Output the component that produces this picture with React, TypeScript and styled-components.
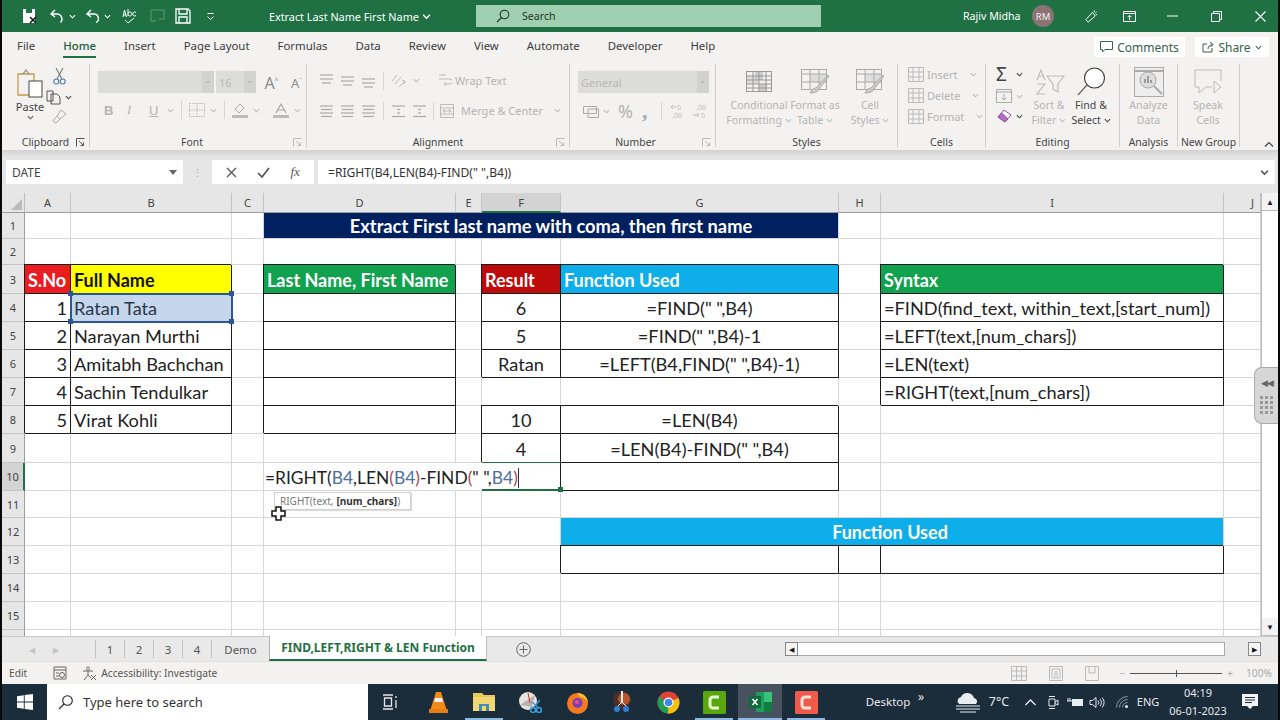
import React from "react";
import styled, { createGlobalStyle } from "styled-components";

const UI = `"Noto Sans", "Open Sans", sans-serif`;
const SHEET = `"Lato", "Liberation Sans", sans-serif`;
const MUTED = "#b4b4b4";
const INK = "#444";

const GlobalStyle = createGlobalStyle`
  html, body { margin: 0; padding: 0; width: 1280px; height: 720px; overflow: hidden; background: #000; }
  #root { width: 1280px; height: 720px; }
  * { box-sizing: border-box; }
`;

const Shell = styled.div`
  width: 1280px;
  height: 720px;
  display: flex;
  flex-direction: column;
  border-left: 2px solid #0a0a0a;
  border-right: 2px solid #0a0a0a;
  font-family: ${UI};
  background: #f3f2f1;
  position: relative;
  overflow: hidden;
`;
const Gap = styled.span<{ $w: number }>`
  width: ${(p) => p.$w}px;
  flex: none;
`;

/* ---------- title bar ---------- */
const TitleBar = styled.div`
  height: 32px;
  flex: none;
  display: flex;
  align-items: center;
  background: #1f7144;
  color: #fff;
  font-size: 11.5px;
`;
const Qat = styled.div`
  display: flex;
  align-items: center;
  width: 267px;
  padding-left: 19px;
`;
const Slot = styled.span<{ $w: number }>`
  width: ${(p) => p.$w}px;
  flex: none;
  display: flex;
  justify-content: center;
  align-items: center;
`;
const DocTitle = styled.div`
  width: 207px;
  flex: none;
  white-space: nowrap;
  font-size: 10.8px;
  display: flex;
  align-items: center;
  gap: 3px;
`;
const SearchBox = styled.div`
  width: 345px;
  height: 22px;
  flex: none;
  background: #9fcfb0;
  color: #22382b;
  display: flex;
  align-items: center;
  padding-left: 20px;
  gap: 12px;
  font-size: 10.6px;
`;
const UserName = styled.div`
  margin-left: 142px;
  width: 69px;
  flex: none;
  font-size: 10.6px;
  white-space: nowrap;
`;
const Avatar = styled.div`
  width: 22px;
  height: 22px;
  border-radius: 50%;
  flex: none;
  background: #8b7374;
  font-size: 9.5px;
  display: flex;
  align-items: center;
  justify-content: center;
  margin-right: 30px;
  color: #eee;
`;

/* ---------- ribbon tabs ---------- */
const MenuRow = styled.div`
  height: 26px;
  flex: none;
  display: flex;
  align-items: stretch;
  padding-left: 15px;
  gap: 28px;
  font-size: 11.4px;
  color: #3c3c3c;
`;
const MenuTab = styled.div<{ $active?: boolean }>`
  display: flex;
  align-items: center;
  white-space: nowrap;
  padding-top: 3px;
  color: ${(p) => (p.$active ? "#1c5c38" : "#3c3c3c")};
  border-bottom: 2px solid ${(p) => (p.$active ? "#1f7144" : "transparent")};
  font-weight: ${(p) => (p.$active ? 500 : 400)};
`;
const MenuEnd = styled.div`
  margin-left: auto;
  display: flex;
  align-items: center;
  gap: 10px;
  padding: 4px 9px 0 0;
`;
const PillButton = styled.div<{ $w: number }>`
  width: ${(p) => p.$w}px;
  height: 20px;
  background: #fff;
  display: flex;
  align-items: center;
  justify-content: center;
  gap: 4px;
  font-size: 12px;
  color: #38604a;
`;

/* ---------- ribbon ---------- */
const Ribbon = styled.div`
  height: 92px;
  flex: none;
  display: flex;
  padding-top: 6px;
  background: #f3f2f1;
  position: relative;
`;
const Group = styled.div<{ $w: number }>`
  width: ${(p) => p.$w}px;
  flex: none;
  height: 83px;
  border-right: 1px solid #cfcfcf;
  display: flex;
  flex-direction: column;
`;
const GroupBody = styled.div<{ $pad?: number }>`
  flex: 1;
  display: flex;
  padding-left: ${(p) => p.$pad ?? 0}px;
  padding-top: 4px;
  min-height: 0;
`;
const GroupFoot = styled.div<{ $nudge?: number }>`
  height: 12px;
  flex: none;
  display: grid;
  grid-template-columns: 1fr auto 1fr;
  align-items: center;
  padding-right: ${(p) => p.$nudge ?? 0}px;
  font-size: 10.4px;
  color: #444;
  white-space: nowrap;
`;
const Launcher = styled.span<{ $back?: number }>`
  justify-self: end;
  margin-right: ${(p) => 4 - (p.$back ?? 0)}px;
  display: flex;
`;
const Col = styled.div<{ $gap?: number; $w?: number; $top?: number; $center?: boolean }>`
  display: flex;
  flex-direction: column;
  gap: ${(p) => p.$gap ?? 0}px;
  width: ${(p) => (p.$w ? `${p.$w}px` : "auto")};
  margin-top: ${(p) => p.$top ?? 0}px;
  align-items: ${(p) => (p.$center ? "center" : "flex-start")};
  flex: none;
`;
const Row = styled.div<{ $gap?: number }>`
  display: flex;
  align-items: center;
  gap: ${(p) => p.$gap ?? 0}px;
`;
const FormatRow = styled(Row)`
  padding-left: 6px;
  color: ${MUTED};
  font-size: 13px;
`;
const FmtLetter = styled.span<{ $w: number; $kind: "b" | "i" | "u" }>`
  width: ${(p) => p.$w}px;
  flex: none;
  font-family: ${(p) => (p.$kind === "i" ? `"Liberation Serif", serif` : `"Liberation Sans", sans-serif`)};
  font-weight: ${(p) => (p.$kind === "b" ? 700 : 400)};
  font-style: ${(p) => (p.$kind === "i" ? "italic" : "normal")};
  text-decoration: ${(p) => (p.$kind === "u" ? "underline" : "none")};
`;
const GrowLetter = styled.span<{ $size: number }>`
  width: 23px;
  flex: none;
  text-align: center;
  color: #8c8c8c;
  font-size: ${(p) => p.$size}px;
  line-height: 20px;
  sup {
    font-size: 7px;
  }
`;
const ComboBox = styled.div<{ $w: number }>`
  width: ${(p) => p.$w}px;
  height: 22px;
  flex: none;
  background: #dcdcda;
  color: #b8b8b8;
  font-size: 11px;
  display: flex;
  align-items: center;
  padding-left: 3px;
  position: relative;
  &::after {
    content: "⌄";
    position: absolute;
    right: 0;
    top: 0;
    width: 12px;
    height: 22px;
    background: #d2d2d0;
    color: #aaa;
    font-size: 9px;
    line-height: 17px;
    text-align: center;
  }
`;
const VDivider = styled.span<{ $mx?: number }>`
  width: 1px;
  height: 18px;
  background: #d5d5d5;
  flex: none;
  margin: 0 ${(p) => p.$mx ?? 0}px;
`;
const BtnLabel = styled.div<{ $muted?: boolean; $size?: number; $mt?: number }>`
  font-size: ${(p) => p.$size ?? 10.6}px;
  line-height: 15px;
  margin-top: ${(p) => p.$mt ?? 0}px;
  text-align: center;
  color: ${(p) => (p.$muted ? MUTED : INK)};
  white-space: nowrap;
`;
const BigBtn = styled.div<{ $w: number; $muted?: boolean }>`
  width: ${(p) => p.$w}px;
  flex: none;
  display: flex;
  flex-direction: column;
  align-items: center;
  color: ${(p) => (p.$muted ? MUTED : INK)};
`;
const IconBox = styled.div<{ $h: number; $lift?: number }>`
  height: ${(p) => p.$h}px;
  padding-bottom: ${(p) => p.$lift ?? 0}px;
  display: flex;
  align-items: center;
  justify-content: center;
  flex: none;
`;
const SmallBtn = styled.div`
  display: flex;
  align-items: center;
  gap: 3px;
  height: 21px;
  font-size: 11px;
  color: ${MUTED};
  white-space: nowrap;
`;
const NumRow = styled(Row)`
  color: ${MUTED};
  padding-left: 5px;
`;
const Percent = styled.span`
  font-size: 18px;
  width: 24px;
  line-height: 20px;
  flex: none;
`;
const CommaMark = styled.b`
  font-size: 22px;
  width: 19px;
  line-height: 14px;
  flex: none;
  font-family: "Liberation Serif", serif;
  color: #aaa;
`;
const Sigma = styled.span`
  font-size: 19px;
  line-height: 18px;
  color: #444;
  width: 17px;
  flex: none;
`;
const Collapse = styled.span`
  margin-left: auto;
  align-self: flex-end;
  margin-right: 4px;
  margin-bottom: 2px;
  display: flex;
`;

/* ---------- formula bar ---------- */
const FormulaBar = styled.div`
  height: 43px;
  flex: none;
  display: flex;
  padding: 10px 3px 9px 4px;
  background: linear-gradient(#d2d2d2 0, #e6e6e6 8px, #e6e6e6 100%);
  font-size: 12px;
  color: #444;
`;
const NameBox = styled.div`
  width: 177px;
  background: #fff;
  display: flex;
  align-items: center;
  justify-content: space-between;
  padding: 0 6px;
  flex: none;
`;
const Grip = styled.div`
  width: 29px;
  flex: none;
  display: flex;
  align-items: center;
  justify-content: center;
  color: #aaa;
  font-size: 11px;
`;
const FxBox = styled.div`
  width: 102px;
  flex: none;
  background: #fff;
  display: flex;
  align-items: center;
  justify-content: space-around;
  padding: 0 4px;
`;
const FxGlyph = styled.span`
  font-family: "Liberation Serif", serif;
  font-style: italic;
  font-size: 13px;
  color: #555;
`;
const FormulaInput = styled.div`
  flex: 1;
  margin-left: 4px;
  background: #fff;
  display: flex;
  align-items: center;
  justify-content: space-between;
  padding: 0 6px 0 10px;
  font-size: 12.1px;
  color: #333;
`;

/* ---------- sheet ---------- */
const Sheet = styled.div`
  height: 443px;
  flex: none;
  display: flex;
  position: relative;
  overflow: hidden;
  background: #fff;
`;
const Grid = styled.div<{ $cols: string; $rows: string }>`
  display: grid;
  grid-template-columns: ${(p) => p.$cols};
  grid-template-rows: ${(p) => p.$rows};
  font-family: ${SHEET};
  font-size: 18.2px;
  color: #222;
`;
const Corner = styled.div`
  background: #e6e6e6;
  border-right: 1px solid #bdbdbd;
  border-bottom: 1px solid #9c9c9c;
  position: relative;
  &::after {
    content: "";
    position: absolute;
    right: 2px;
    bottom: 2px;
    border-left: 11px solid transparent;
    border-bottom: 11px solid #bcbcbc;
  }
`;
const ColHead = styled.div<{ $on?: boolean; $end?: boolean }>`
  background: ${(p) => (p.$on ? "#d3d3d3" : "#e6e6e6")};
  border-right: 1px solid #c4c4c4;
  border-bottom: ${(p) => (p.$on ? "2px solid #1f7144" : "1px solid #9c9c9c")};
  display: flex;
  align-items: center;
  justify-content: ${(p) => (p.$end ? "flex-end" : "center")};
  padding-right: ${(p) => (p.$end ? 6 : 0)}px;
  font: 11px ${UI};
  color: #444;
`;
const RowHead = styled.div<{ $on?: boolean }>`
  background: ${(p) => (p.$on ? "#d3d3d3" : "#e6e6e6")};
  border-right: ${(p) => (p.$on ? "2px solid #1f7144" : "1px solid #9c9c9c")};
  border-bottom: 1px solid #c4c4c4;
  display: flex;
  align-items: center;
  justify-content: center;
  font: 11px ${UI};
  color: #444;
`;
type CellStyle = {
  $span?: number;
  $bg?: string;
  $color?: string;
  $bold?: boolean;
  $align?: "left" | "right" | "center";
  $box?: boolean;
  $size?: number;
  $sel?: boolean;
  $noRight?: boolean;
  $active?: boolean;
  $shift?: number;
};
const CellBox = styled.div<CellStyle>`
  grid-column: span ${(p) => p.$span ?? 1};
  min-width: 0;
  display: flex;
  align-items: center;
  padding: 1px ${(p) => 3 + (p.$shift ?? 0)}px 0 3px;
  white-space: nowrap;
  position: relative;
  background: ${(p) => (p.$sel ? "#c6d6ea" : p.$bg ?? "transparent")};
  color: ${(p) => p.$color ?? "#222"};
  font-weight: ${(p) => (p.$bold ? 700 : 400)};
  font-size: ${(p) => (p.$size ? `${p.$size}px` : "inherit")};
  justify-content: ${(p) =>
    p.$align === "right" ? "flex-end" : p.$align === "center" ? "center" : "flex-start"};
  border-right: 1px solid ${(p) => (p.$box ? "#1c1c1c" : p.$noRight ? "transparent" : "#d6d6d6")};
  border-bottom: 1px solid ${(p) => (p.$box ? "#1c1c1c" : "#d6d6d6")};
  box-shadow: ${(p) => (p.$box ? "-1px -1px 0 #1c1c1c" : "none")};
  ${(p) => (p.$sel ? "outline: 2px solid #2b5797; outline-offset: -1px; z-index: 2;" : "")}
  ${(p) =>
    p.$active
      ? "border-bottom: 2px solid #1f7144; border-right-color: transparent; box-shadow: 0 -1px 0 #1f7144; z-index: 2;"
      : ""}
`;
const Handle = styled.span<{ $x: "left" | "right"; $y: "top" | "bottom"; $c?: string }>`
  position: absolute;
  ${(p) => p.$x}: -3px;
  ${(p) => p.$y}: -3px;
  width: 5px;
  height: 5px;
  background: ${(p) => p.$c ?? "#2b5797"};
  z-index: 3;
`;
const Overflowing = styled.span`
  position: relative;
  z-index: 4;
  margin-left: -2px;
  font-size: 17.4px;
  color: #222;
`;
const Ref = styled.span`
  color: #4a6fa5;
`;
const Paren = styled.span`
  color: #a8464f;
`;
const Caret = styled.span`
  display: inline-block;
  width: 1px;
  height: 20px;
  background: #333;
  vertical-align: -4px;
`;
const FnTip = styled.div`
  position: absolute;
  left: 272px;
  top: 299px;
  height: 18px;
  width: 137px;
  background: #fff;
  border: 1px solid #cfcfcf;
  box-shadow: 1px 1px 1px #ddd;
  font: 10px ${UI};
  color: #777;
  display: flex;
  align-items: center;
  padding-left: 5px;
  white-space: nowrap;
  z-index: 6;
  b {
    color: #333;
    margin-left: 3px;
  }
`;
const Pointer = styled.span`
  position: absolute;
  left: 269px;
  top: 313px;
  z-index: 7;
  display: flex;
`;
const VScroll = styled.div`
  width: 17px;
  flex: none;
  background: #fff;
  border-left: 1px solid #bbb;
  display: flex;
  flex-direction: column;
  justify-content: space-between;
  align-items: stretch;
`;
const VBtn = styled.div`
  height: 18px;
  border-bottom: 1px solid #bbb;
  background: #f3f3f3;
  display: flex;
  align-items: center;
  justify-content: center;
  color: #222;
  font-size: 8px;
`;
const SplitTab = styled.div`
  position: absolute;
  right: 0;
  top: 174px;
  width: 24px;
  height: 57px;
  background: #d6d6d6;
  border: 1px solid #aaa;
  border-right: none;
  border-radius: 8px 0 0 8px;
  display: flex;
  flex-direction: column;
  align-items: center;
  padding-top: 8px;
  gap: 7px;
  z-index: 5;
`;
const SplitArrows = styled.span`
  font-size: 9px;
  color: #666;
  letter-spacing: -1px;
`;

/* ---------- sheet tabs ---------- */
const TabsBar = styled.div`
  height: 25px;
  flex: none;
  display: flex;
  align-items: stretch;
  background: #e9e9e9;
  border-top: 1px solid #c9c9c9;
  font-size: 11.4px;
  color: #555;
`;
const TabNav = styled.div`
  width: 93px;
  flex: none;
  display: flex;
  align-items: center;
  gap: 18px;
  padding-left: 27px;
  color: #c4c4c4;
  font-size: 8px;
`;
const SheetTab = styled.div<{ $w: number; $active?: boolean }>`
  width: ${(p) => p.$w}px;
  flex: none;
  display: flex;
  align-items: center;
  justify-content: center;
  white-space: nowrap;
  border-left: 1px solid ${(p) => (p.$active ? "#b5b5b5" : "#c0c0c0")};
  margin: ${(p) => (p.$active ? "-1px 0 0" : "3px 0")};
  background: ${(p) => (p.$active ? "#fff" : "transparent")};
  color: ${(p) => (p.$active ? "#1f7144" : "#555")};
  font-weight: ${(p) => (p.$active ? 700 : 400)};
  font-size: ${(p) => (p.$active ? 12 : 11.4)}px;
  border-bottom: ${(p) => (p.$active ? "2px solid #1f7144" : "none")};
  border-right: ${(p) => (p.$active ? "1px solid #c0c0c0" : "none")};
`;
const AddTab = styled.div`
  margin-left: 29px;
  width: 16px;
  display: flex;
  align-items: center;
`;
const HScroll = styled.div`
  margin-left: auto;
  margin-right: 20px;
  width: 473px;
  display: flex;
  align-items: center;
`;
const HBtn = styled.div`
  width: 13px;
  height: 14px;
  border: 1px solid #888;
  background: #f4f4f4;
  font-size: 7px;
  color: #111;
  display: flex;
  align-items: center;
  justify-content: center;
  flex: none;
`;
const HTrack = styled.div`
  width: 427px;
  height: 14px;
  border: 1px solid #aaa;
  border-left: none;
  background: #fff;
  margin-right: 23px;
  flex: none;
`;

/* ---------- status bar ---------- */
const StatusBar = styled.div`
  height: 23px;
  flex: none;
  display: flex;
  align-items: center;
  padding-left: 7px;
  background: #f3f2f1;
  border-top: 1px solid #e0e0e0;
  font-size: 10.2px;
  color: #555;
  white-space: nowrap;
`;
const StatusEnd = styled.div`
  margin-left: auto;
  display: flex;
  align-items: center;
  padding-right: 6px;
  color: #aaa;
`;
const ZoomSlider = styled.div`
  width: 92px;
  height: 1px;
  background: #555;
  margin: 0 5px;
  position: relative;
  &::after {
    content: "";
    position: absolute;
    left: 46px;
    top: -3px;
    width: 1px;
    height: 7px;
    background: #555;
  }
`;

/* ---------- taskbar ---------- */
const Taskbar = styled.div`
  height: 36px;
  flex: none;
  display: flex;
  align-items: stretch;
  background: #1b2c3b;
  color: #e4e8ec;
  font-size: 11.5px;
`;
const StartBtn = styled.div`
  width: 45px;
  flex: none;
  display: flex;
  align-items: center;
  justify-content: center;
`;
const TaskSearch = styled.div`
  width: 321px;
  flex: none;
  background: #fff;
  display: flex;
  align-items: center;
  gap: 10px;
  padding-left: 11px;
  color: #333;
  font-size: 13px;
`;
const TaskItem = styled.div<{ $w: number; $open?: boolean; $active?: boolean }>`
  width: ${(p) => p.$w}px;
  flex: none;
  display: flex;
  align-items: center;
  justify-content: center;
  position: relative;
  background: ${(p) => (p.$active ? "#46535f" : "transparent")};
  &::after {
    content: "";
    display: ${(p) => (p.$open ? "block" : "none")};
    position: absolute;
    bottom: 0;
    left: 50%;
    width: ${(p) => (p.$active ? "100%" : "38px")};
    height: 2px;
    transform: translateX(-50%);
    background: #8fb9de;
  }
`;
const TrayText = styled.div<{ $w: number; $size?: number }>`
  width: ${(p) => p.$w}px;
  flex: none;
  display: flex;
  flex-direction: column;
  align-items: center;
  justify-content: center;
  font-size: ${(p) => p.$size ?? 11.5}px;
  line-height: 18px;
  white-space: nowrap;
`;
const DoubleChevron = styled.span`
  font-size: 12px;
  margin-top: -12px;
`;

/* ---------- icons ---------- */
const Chevron = ({ c = "#888", s = 7 }: { c?: string; s?: number }) => (
  <svg width={s} height={s} viewBox="0 0 8 8" fill="none" stroke={c} strokeWidth="1.2">
    <path d="M1 2.5 4 5.5 7 2.5" />
  </svg>
);
const LinesIcon = ({ rows, c = "#aaa" }: { rows: [number, number][]; c?: string }) => (
  <svg width="15" height="14" viewBox="0 0 15 14" stroke={c} strokeWidth="1.2">
    {rows.map(([y, x], i) => (
      <path key={i} d={`M${x} ${y}H${15 - x}`} />
    ))}
  </svg>
);
const AlignLines = ({ y }: { y: number }) => (
  <LinesIcon rows={[[y, 1], [y + 4, 1], [y + 8, 3]]} />
);
const FullLines = () => <LinesIcon rows={[[2, 1], [5.5, 2], [9, 1], [12.5, 2]]} />;
const Launch = ({ c = "#999" }: { c?: string }) => (
  <svg width="9" height="9" viewBox="0 0 9 9" fill="none" stroke={c}>
    <path d="M.5 8.5V.5H8.5M3 3 7.5 7.5M7.5 4.5V7.5H4.5" />
  </svg>
);
const SaveIcon = ({ c = "#fff", w = 16 }: { c?: string; w?: number }) => (
  <svg width={w} height={w} viewBox="0 0 16 16" fill="none" stroke={c} strokeWidth="1.3">
    <path d="M1 1H13L15 3V15H1ZM4 1V6H12V1M4 15V9H12V15" />
  </svg>
);
const GridIcon = ({ fill = "#ddd", w = 26, h = 21 }: { fill?: string; w?: number; h?: number }) => (
  <svg width={w} height={h} viewBox="0 0 26 21" fill="none" stroke="#999">
    <rect x=".5" y=".5" width="25" height="20" />
    <rect x="1" y="5" width="12" height="8" fill={fill} stroke="none" />
    <rect x="9" y="1" width="8" height="8" fill="#ccc" stroke="none" />
    <rect x="13" y="13" width="8" height="7" fill="#ccc" stroke="none" />
    <path d="M0 5H26M0 9H26M0 13H26M0 17H26M7 0V21M13 0V21M20 0V21" />
  </svg>
);
const BrushTable = () => (
  <svg width="28" height="26" viewBox="0 0 28 26" fill="none" stroke="#aaa">
    <rect x=".5" y=".5" width="25" height="20" />
    <rect x="9" y="5" width="16" height="8" fill="#ddd" stroke="none" />
    <path d="M0 5H26M0 13H26M9 0V21M18 0V21" />
    <path d="M27 6 15 19c-3 0-4 2-6 5 4 0 8-1 9-4L27.5 8Z" fill="#ccc" />
  </svg>
);

export default function App() {
  const colNames = ["A", "B", "C", "D", "E", "F", "G", "H", "I", "J"];
  const colWidths = [46, 161, 32, 192, 26, 79, 278, 42, 343, 37];
  const rowHeights = [26, 26, 29, 28, 28, 28, 28, 28, 29, 28, 27, 28, 28, 28, 28, 28];

  const RED = "#e91c22";
  const GREEN = "#12a24f";
  const BLUE = "#0eaeea";
  const DARK = "#bd0a0a";
  const NAVY = "#002060";

  const head = (text: string, $bg: string, $color = "#fff") => ({ text, $bg, $color, $bold: true, $box: true, $size: 18 });
  const num = (text: string) => ({ text, $box: true, $align: "right" as const });
  const mid = (text: string) => ({ text, $box: true, $align: "center" as const });
  const left = (text: string) => ({ text, $box: true });

  const cells: Record<string, CellStyle & { text?: React.ReactNode }> = {
    D1: { text: "Extract First last name with coma, then first name", $span: 4, $bg: NAVY, $color: "#fff", $bold: true, $align: "center", $size: 18.3 },
    A3: head("S.No", RED),
    B3: head("Full Name", "#ffff00", "#111"),
    D3: head("Last Name, First Name", GREEN),
    F3: head("Result", DARK),
    G3: head("Function Used", BLUE),
    I3: head("Syntax", GREEN),
    A4: num("1"),
    B4: { text: "Ratan Tata", $sel: true, $color: "#29364a" },
    D4: left(""),
    F4: mid("6"),
    G4: mid('=FIND(" ",B4)'),
    I4: left("=FIND(find_text, within_text,[start_num])"),
    A5: num("2"),
    B5: left("Narayan Murthi"),
    D5: left(""),
    F5: mid("5"),
    G5: mid('=FIND(" ",B4)-1'),
    I5: left("=LEFT(text,[num_chars])"),
    A6: num("3"),
    B6: left("Amitabh Bachchan"),
    D6: left(""),
    F6: mid("Ratan"),
    G6: mid('=LEFT(B4,FIND(" ",B4)-1)'),
    I6: left("=LEN(text)"),
    A7: num("4"),
    B7: left("Sachin Tendulkar"),
    D7: left(""),
    I7: left("=RIGHT(text,[num_chars])"),
    A8: num("5"),
    B8: left("Virat Kohli"),
    D8: left(""),
    F8: mid("10"),
    G8: mid("=LEN(B4)"),
    F9: mid("4"),
    G9: mid('=LEN(B4)-FIND(" ",B4)'),
    D10: {
      $noRight: true,
      text: (
        <Overflowing>
          =RIGHT(<Ref>B4</Ref>,LEN<Paren>(</Paren>
          <Ref>B4</Ref>
          <Paren>)</Paren>-FIND<Paren>(</Paren>" ",<Ref>B4</Ref>
          <Paren>)</Paren>
          <Caret />
        </Overflowing>
      ),
    },
    E10: { $noRight: true },
    F10: { $active: true },
    G10: { $box: true },
    G12: { text: "Function Used", $span: 3, $bg: BLUE, $color: "#fff", $bold: true, $align: "center", $size: 18, $shift: 4 },
    G13: { $box: true },
    H13: { $box: true },
    I13: { $box: true },
  };

  const gridCells: React.ReactNode[] = [
    <Corner key="corner" />,
    ...colNames.map((n) => (
      <ColHead key={n} $on={n === "F"} $end={n === "J"}>
        {n}
      </ColHead>
    )),
  ];
  rowHeights.forEach((_, r) => {
    const rowNo = r + 1;
    gridCells.push(
      <RowHead key={`r${rowNo}`} $on={rowNo === 10}>
        {rowNo < 16 ? rowNo : ""}
      </RowHead>
    );
    let skip = 0;
    colNames.forEach((n) => {
      if (skip > 0) {
        skip -= 1;
        return;
      }
      const id = `${n}${rowNo}`;
      const { text, ...style } = cells[id] ?? {};
      if (style.$span) skip = style.$span - 1;
      gridCells.push(
        <CellBox key={id} {...style}>
          {text}
          {id === "B4" && (
            <>
              <Handle $x="left" $y="top" />
              <Handle $x="right" $y="top" />
              <Handle $x="left" $y="bottom" />
              <Handle $x="right" $y="bottom" />
            </>
          )}
          {id === "F10" && <Handle $x="right" $y="bottom" $c="#1f7144" />}
        </CellBox>
      );
    });
  });

  return (
    <>
      <GlobalStyle />
      <Shell>
        <TitleBar>
          <Qat>
            <Slot $w={18}>
              <svg width="16" height="16" viewBox="0 0 16 16">
                <rect x="1" y="1" width="12" height="14" fill="#fff" />
                <rect x="4" y="1" width="6" height="4" fill="#1f7144" />
                <path d="M8 9 14 15M14 9 8 15" stroke="#111" strokeWidth="1.5" />
              </svg>
            </Slot>
            <Gap $w={7} />
            <Slot $w={20}>
              <svg width="17" height="15" viewBox="0 0 17 15" fill="none" stroke="#fff" strokeWidth="1.4">
                <path d="M10 1 14 5 10 8M14 5H7.5a5 5 0 0 0-3 8.5" transform="matrix(-1 0 0 1 17 0)" />
              </svg>
            </Slot>
            <Slot $w={12}>
              <Chevron c="#fff" />
            </Slot>
            <Gap $w={4} />
            <Slot $w={20}>
              <svg width="17" height="15" viewBox="0 0 17 15" fill="none" stroke="#fff" strokeWidth="1.4">
                <path d="M7 1 3 5 7 8M3 5H10a4.500 4.500 0 0 1 2 8.500" />
              </svg>
            </Slot>
            <Slot $w={10}>
              <Chevron c="#fff" />
            </Slot>
            <Gap $w={5} />
            <Slot $w={24}>
              <svg width="15" height="16" viewBox="0 0 15 16" fill="none" stroke="#fff">
                <path d="M1 9 2.500 2 4.500 9M1.500 7H3.800M6 1V8M6 5.500a2 2 0 1 1 0 1M14 4.500a2 2 0 1 0 0 3M3 12 6 15 12 10" />
              </svg>
            </Slot>
            <Gap $w={4} />
            <Slot $w={24}>
              <svg width="15" height="14" viewBox="0 0 15 14" fill="none" stroke="#5f9a7a">
                <path d="M1 1H14V10H9M1 1V12H6" />
              </svg>
            </Slot>
            <Gap $w={2} />
            <Slot $w={24}>
              <SaveIcon />
            </Slot>
            <Gap $w={3} />
            <Slot $w={24}>
              <svg width="9" height="9" viewBox="0 0 9 9" fill="none" stroke="#fff">
                <path d="M1.500 1.500H7.500M1.500 4.500 4.500 7.500 7.500 4.500" />
              </svg>
            </Slot>
          </Qat>
          <DocTitle>
            Extract Last Name First Name <Chevron c="#fff" s={9} />
          </DocTitle>
          <SearchBox>
            <svg width="14" height="14" viewBox="0 0 14 14" fill="none" stroke="#22382b" strokeWidth="1.1">
              <circle cx="8.500" cy="5.500" r="4.300" />
              <path d="M5.500 8.500 1 13" />
            </svg>
            Search
          </SearchBox>
          <UserName>Rajiv Midha</UserName>
          <Avatar>RM</Avatar>
          <Slot $w={14}>
            <svg width="15" height="15" viewBox="0 0 15 15" fill="none" stroke="#fff">
              <path d="M9 3 2 11 4.500 13.500 12 7ZM11 1V3M13.500 2.500 12 4M14 5.500H12.500" />
            </svg>
          </Slot>
          <Slot $w={62}>
            <svg width="13" height="11" viewBox="0 0 13 11" fill="none" stroke="#fff">
              <path d="M.5.5H12.500V10.500H.5ZM.5 2.500H12.500M6.500 9V4.500M4.500 6 6.500 4.500 8.500 6" />
            </svg>
          </Slot>
          <Slot $w={24}>
            <svg width="11" height="2" viewBox="0 0 11 2" stroke="#fff">
              <path d="M0 1H11" />
            </svg>
          </Slot>
          <Slot $w={64}>
            <svg width="11" height="11" viewBox="0 0 11 11" fill="none" stroke="#fff">
              <path d="M.5 2.500H8.500V10.500H.5ZM2.500 2.500V.5H10.500V8.500H8.500" />
            </svg>
          </Slot>
          <Slot $w={24}>
            <svg width="11" height="11" viewBox="0 0 11 11" stroke="#fff" strokeWidth="1.1">
              <path d="M.5.5 10.500 10.500M10.500.5.5 10.500" />
            </svg>
          </Slot>
        </TitleBar>

        <MenuRow>
          <MenuTab>File</MenuTab>
          <MenuTab $active>Home</MenuTab>
          <MenuTab>Insert</MenuTab>
          <MenuTab>Page Layout</MenuTab>
          <MenuTab>Formulas</MenuTab>
          <MenuTab>Data</MenuTab>
          <MenuTab>Review</MenuTab>
          <MenuTab>View</MenuTab>
          <MenuTab>Automate</MenuTab>
          <MenuTab>Developer</MenuTab>
          <MenuTab>Help</MenuTab>
          <MenuEnd>
            <PillButton $w={91}>
              <svg width="13" height="12" viewBox="0 0 13 12" fill="none" stroke="#38604a">
                <path d="M.5.5H12.500V8.500H5L2.500 11V8.500H.5Z" />
              </svg>
              Comments
            </PillButton>
            <PillButton $w={74}>
              <svg width="12" height="12" viewBox="0 0 12 12" fill="none" stroke="#38604a">
                <path d="M5 3H1V11H10V7M6 8C6 5 8 4 11 3.500M8 1 11 3.500 8.500 6" />
              </svg>
              Share
              <Chevron c="#38604a" />
            </PillButton>
          </MenuEnd>
        </MenuRow>

        <Ribbon>
          <Group $w={88}>
            <GroupBody $pad={13}>
              <Col $w={30} $center>
                <IconBox $h={30}>
                  <svg width="28" height="29" viewBox="0 0 28 29" fill="none">
                    <path d="M2 5H18V26H2Z" stroke="#c8994f" strokeWidth="1.3" />
                    <path d="M7 5 10 1 13 5" stroke="#888" strokeWidth="1.2" />
                    <rect x="13" y="12" width="13" height="16" fill="#fff" stroke="#444" />
                  </svg>
                </IconBox>
                <BtnLabel $size={11} $mt={1}>
                  Paste
                </BtnLabel>
                <Chevron c="#555" />
              </Col>
              <Col $w={28} $center $gap={4}>
                <svg width="13" height="17" viewBox="0 0 13 17" fill="none" stroke="#4a7aa8" strokeWidth="1.1">
                  <path d="M3 0 9 11M10 0 4 11" stroke="#777" />
                  <circle cx="3.300" cy="13.500" r="2.500" />
                  <circle cx="9.700" cy="13.500" r="2.500" />
                </svg>
                <Row $gap={3}>
                  <svg width="16" height="16" viewBox="0 0 16 16" fill="none" stroke="#555">
                    <path d="M1 2H7V12H1ZM5 5H11L14 8V15H5Z" fill="#f3f2f1" />
                  </svg>
                  <Chevron c="#444" />
                </Row>
                <svg width="15" height="15" viewBox="0 0 15 15" fill="none" stroke="#aaa">
                  <path d="M9 1 14 5 8 10 5 7ZM5 7 1 12 4 14 8 10" />
                </svg>
              </Col>
            </GroupBody>
            <GroupFoot>
              <span />
              <span>Clipboard</span>
              <Launcher>
                <Launch c="#555" />
              </Launcher>
            </GroupFoot>
          </Group>

          <Group $w={217}>
            <GroupBody $pad={8}>
              <Col $top={3} $gap={8}>
                <Row $gap={2}>
                  <ComboBox $w={116} />
                  <ComboBox $w={40}>16</ComboBox>
                  <Gap $w={0} />
                  <GrowLetter $size={16}>
                    A<sup>^</sup>
                  </GrowLetter>
                  <GrowLetter $size={13}>
                    A<sup>ˇ</sup>
                  </GrowLetter>
                </Row>
                <FormatRow>
                  <FmtLetter $w={23} $kind="b">B</FmtLetter>
                  <FmtLetter $w={22} $kind="i">I</FmtLetter>
                  <FmtLetter $w={18} $kind="u">U</FmtLetter>
                  <Chevron c="#bbb" />
                  <VDivider $mx={7} />
                  <svg width="16" height="14" viewBox="0 0 16 14" fill="none" stroke="#bbb" strokeDasharray="1.500 1">
                    <path d="M.5.5H15.500V13.500H.5ZM8 0V14M0 7H16" />
                  </svg>
                  <Gap $w={5} />
                  <Chevron c="#bbb" />
                  <VDivider $mx={7} />
                  <svg width="16" height="15" viewBox="0 0 16 15" fill="none" stroke="#aaa">
                    <path d="M3 6 8 1 12 5 7 10Z" />
                    <path d="M0 12H16V15H0Z" fill="#bbb" stroke="none" />
                  </svg>
                  <Gap $w={5} />
                  <Chevron c="#bbb" />
                  <Gap $w={13} />
                  <svg width="16" height="15" viewBox="0 0 16 15" fill="none" stroke="#aaa" strokeWidth="1.200">
                    <path d="M3 10 8 1 13 10M5 7H11" />
                    <path d="M0 12H16V15H0Z" fill="#bbb" stroke="none" />
                  </svg>
                  <Gap $w={5} />
                  <Chevron c="#bbb" />
                </FormatRow>
              </Col>
            </GroupBody>
            <GroupFoot $nudge={12}>
              <span />
              <span>Font</span>
              <Launcher $back={12}>
                <Launch c="#bbb" />
              </Launcher>
            </GroupFoot>
          </Group>

          <Group $w={263}>
            <GroupBody $pad={12}>
              <Col $top={2} $gap={9}>
                <Row $gap={6}>
                  <AlignLines y={1} />
                  <AlignLines y={3} />
                  <AlignLines y={5} />
                  <VDivider $mx={1} />
                  <svg width="16" height="16" viewBox="0 0 16 16" fill="none" stroke="#bbb">
                    <path d="M1 8 6 2M4 11 10 4M8 14 14 8M11 7 14 8 13 11" />
                  </svg>
                  <Chevron c="#bbb" />
                  <Gap $w={6} />
                  <SmallBtn>
                    <svg width="14" height="14" viewBox="0 0 14 14" fill="none" stroke="#bbb">
                      <path d="M1 1H8M1 5H12a2 2 0 0 1 0 5H6M8 8 6 10 8 12" />
                    </svg>
                    Wrap Text
                  </SmallBtn>
                </Row>
                <Row $gap={6}>
                  <FullLines />
                  <FullLines />
                  <FullLines />
                  <VDivider $mx={1} />
                  <LinesIcon rows={[[2, 1], [5.5, 6], [9, 6], [12.5, 1]]} />
                  <LinesIcon rows={[[2, 1], [5.5, 6], [9, 6], [12.5, 1]]} />
                  <VDivider />
                  <SmallBtn>
                    <svg width="14" height="14" viewBox="0 0 14 14" fill="none" stroke="#bbb">
                      <path d="M.5.5H13.500V13.500H.5ZM0 4H14M0 10H14M3 7H11M3 7 5 5.500M3 7 5 8.500M11 7 9 5.500M11 7 9 8.500" />
                    </svg>
                    <Gap $w={1} />
                    Merge &amp; Center
                    <Gap $w={5} />
                    <Chevron c="#bbb" />
                  </SmallBtn>
                </Row>
              </Col>
            </GroupBody>
            <GroupFoot>
              <span />
              <span>Alignment</span>
              <Launcher>
                <Launch c="#bbb" />
              </Launcher>
            </GroupFoot>
          </Group>

          <Group $w={146}>
            <GroupBody $pad={8}>
              <Col $top={3} $gap={8}>
                <ComboBox $w={131}>General</ComboBox>
                <NumRow>
                  <svg width="16" height="14" viewBox="0 0 16 14" fill="none" stroke="#aaa">
                    <path d="M.5 2.500H13.500V9.500H.5ZM5 5H15.500V13.500H5Z" fill="#f3f2f1" />
                  </svg>
                  <Gap $w={4} />
                  <Chevron c="#bbb" />
                  <Gap $w={8} />
                  <Percent>%</Percent>
                  <CommaMark>,</CommaMark>
                  <VDivider />
                  <Gap $w={8} />
                  <svg width="38" height="16" viewBox="0 0 38 16" fill="none" stroke="#bbb">
                    <path d="M1 4H6M1 4 3 2M1 4 3 6" />
                    <text x="7" y="7" fontSize="7" fill="#bbb" stroke="none" fontFamily="Noto Sans">
                      0
                    </text>
                    <text x="2" y="15" fontSize="7" fill="#bbb" stroke="none" fontFamily="Noto Sans">
                      .00
                    </text>
                    <text x="26" y="7" fontSize="7" fill="#bbb" stroke="none" fontFamily="Noto Sans">
                      .00
                    </text>
                    <path d="M23 12H29M29 12 27 10M29 12 27 14" />
                    <text x="31" y="15" fontSize="7" fill="#bbb" stroke="none" fontFamily="Noto Sans">
                      0
                    </text>
                  </svg>
                </NumRow>
              </Col>
            </GroupBody>
            <GroupFoot $nudge={14}>
              <span />
              <span>Number</span>
              <Launcher $back={14}>
                <Launch c="#bbb" />
              </Launcher>
            </GroupFoot>
          </Group>

          <Group $w={182}>
            <GroupBody $pad={15}>
              <BigBtn $w={56} $muted>
                <IconBox $h={30} $lift={4}>
                  <GridIcon />
                </IconBox>
                <BtnLabel $muted>Conditional</BtnLabel>
                <BtnLabel $muted>
                  Formatting <Chevron c="#bbb" />
                </BtnLabel>
              </BigBtn>
              <BigBtn $w={56} $muted>
                <IconBox $h={30} $lift={2}>
                  <BrushTable />
                </IconBox>
                <BtnLabel $muted>Format as</BtnLabel>
                <BtnLabel $muted>
                  Table <Chevron c="#bbb" />
                </BtnLabel>
              </BigBtn>
              <BigBtn $w={54} $muted>
                <IconBox $h={30} $lift={2}>
                  <BrushTable />
                </IconBox>
                <BtnLabel $muted>Cell</BtnLabel>
                <BtnLabel $muted>
                  Styles <Chevron c="#bbb" />
                </BtnLabel>
              </BigBtn>
            </GroupBody>
            <GroupFoot>
              <span />
              <span>Styles</span>
              <span />
            </GroupFoot>
          </Group>

          <Group $w={88}>
            <GroupBody $pad={10}>
              <Col $top={-4}>
                {["Insert", "Delete", "Format"].map((label) => (
                  <SmallBtn key={label}>
                    <svg width="16" height="15" viewBox="0 0 16 15" fill="none" stroke="#bbb">
                      <path d="M.5.5H15.500V14.500H.5ZM0 5H16M0 10H16M5 0V15M11 0V15" />
                    </svg>
                    {label}
                    <Gap $w={6} />
                    <Chevron c="#bbb" />
                  </SmallBtn>
                ))}
              </Col>
            </GroupBody>
            <GroupFoot>
              <span />
              <span>Cells</span>
              <span />
            </GroupFoot>
          </Group>

          <Group $w={134}>
            <GroupBody $pad={10}>
              <Col $w={32} $gap={6} $top={-3}>
                <Row $gap={3}>
                  <Sigma>Σ</Sigma>
                  <Chevron c="#444" />
                </Row>
                <Row $gap={4}>
                  <svg width="16" height="14" viewBox="0 0 16 14" fill="none" stroke="#aaa">
                    <path d="M.5.5H15.500V13.500H.5ZM0 3H16M8 5V11M5.500 8.500 8 11 10.500 8.500" />
                  </svg>
                  <Chevron c="#bbb" />
                </Row>
                <Row $gap={4}>
                  <svg width="16" height="14" viewBox="0 0 16 14" stroke="#8f4fa0">
                    <path d="M8 1 15 6 9 13 2 8Z" fill="#fff" />
                    <path d="M2 8 5.500 4 12 10 9 13Z" fill="#b46cc6" />
                  </svg>
                  <Chevron c="#444" />
                </Row>
              </Col>
              <BigBtn $w={42} $muted>
                <IconBox $h={30} $lift={2}>
                  <svg width="32" height="28" viewBox="0 0 32 28" fill="none" stroke="#bbb" strokeWidth="1.100">
                    <path d="M4 12 8 2 12 12M5.500 8H10.500M4 16H12L4 26H12" />
                    <path d="M14 8H31L25 16V24L20 21V16Z" />
                  </svg>
                </IconBox>
                <BtnLabel $muted>Sort &amp;</BtnLabel>
                <BtnLabel $muted>
                  Filter <Chevron c="#bbb" />
                </BtnLabel>
              </BigBtn>
              <BigBtn $w={42}>
                <IconBox $h={30} $lift={2}>
                  <svg width="30" height="30" viewBox="0 0 30 30" fill="none" stroke="#333" strokeWidth="1.100">
                    <circle cx="18.500" cy="11" r="10" fill="#fff" />
                    <path d="M11 18 2 28" />
                  </svg>
                </IconBox>
                <BtnLabel>Find &amp;</BtnLabel>
                <BtnLabel>
                  Select <Chevron c="#444" />
                </BtnLabel>
              </BigBtn>
            </GroupBody>
            <GroupFoot>
              <span />
              <span>Editing</span>
              <span />
            </GroupFoot>
          </Group>

          <Group $w={58}>
            <GroupBody>
              <BigBtn $w={57} $muted>
                <IconBox $h={30} $lift={2}>
                  <svg width="30" height="30" viewBox="0 0 30 30" fill="none" stroke="#aaa">
                    <rect x=".5" y=".5" width="29" height="29" fill="#eee" />
                    <path d="M0 4H30" strokeWidth="2" />
                    <circle cx="14" cy="13" r="8" fill="#ddd" />
                    <path d="M20 19 28 27" strokeWidth="2" />
                    <path d="M11 16V12M14 16V9M17 16V13" strokeWidth="2" stroke="#999" />
                  </svg>
                </IconBox>
                <BtnLabel $muted>Analyze</BtnLabel>
                <BtnLabel $muted>Data</BtnLabel>
              </BigBtn>
            </GroupBody>
            <GroupFoot>
              <span />
              <span>Analysis</span>
              <span />
            </GroupFoot>
          </Group>

          <Group $w={62}>
            <GroupBody>
              <BigBtn $w={60} $muted>
                <IconBox $h={30} $lift={2}>
                  <svg width="28" height="26" viewBox="0 0 28 26" fill="none" stroke="#bbb">
                    <path d="M1 1H27V12M1 1V18H5V24L12 18H18" />
                    <path d="M20 12 27 18 20 24Z" />
                  </svg>
                </IconBox>
                <BtnLabel $muted>Speak</BtnLabel>
                <BtnLabel $muted>Cells</BtnLabel>
              </BigBtn>
            </GroupBody>
            <GroupFoot>
              <span />
              <span>New Group</span>
              <span />
            </GroupFoot>
          </Group>

          <Collapse>
            <svg width="10" height="7" viewBox="0 0 10 7" fill="none" stroke="#444" strokeWidth="1.200">
              <path d="M1 5.500 5 1.500 9 5.500" />
            </svg>
          </Collapse>
        </Ribbon>

        <FormulaBar>
          <NameBox>
            DATE
            <svg width="8" height="5" viewBox="0 0 8 5" fill="#666">
              <path d="M0 0H8L4 5Z" />
            </svg>
          </NameBox>
          <Grip>⋮</Grip>
          <FxBox>
            <svg width="11" height="11" viewBox="0 0 11 11" stroke="#555" strokeWidth="1.300">
              <path d="M1 1 10 10M10 1 1 10" />
            </svg>
            <svg width="13" height="11" viewBox="0 0 13 11" fill="none" stroke="#555" strokeWidth="1.700">
              <path d="M1 6 5 10 12 1" />
            </svg>
            <FxGlyph>fx</FxGlyph>
          </FxBox>
          <FormulaInput>
            =RIGHT(B4,LEN(B4)-FIND(" ",B4))
            <Chevron c="#444" s={9} />
          </FormulaInput>
        </FormulaBar>

        <Sheet>
          <Grid
            $cols={`23px ${colWidths.map((w) => `${w}px`).join(" ")}`}
            $rows={`20px ${rowHeights.map((h) => `${h}px`).join(" ")}`}
          >
            {gridCells}
          </Grid>
          <VScroll>
            <VBtn>▲</VBtn>
            <VBtn>▼</VBtn>
          </VScroll>
          <FnTip>
            RIGHT(text, <b>[num_chars]</b>)
          </FnTip>
          <Pointer>
            <svg width="15" height="15" viewBox="0 0 15 15" fill="#fff" stroke="#111" strokeWidth="1.500">
              <path d="M5 1H10V5H14V10H10V14H5V10H1V5H5Z" />
            </svg>
          </Pointer>
          <SplitTab>
            <SplitArrows>◀◀</SplitArrows>
            <svg width="13" height="18" viewBox="0 0 13 18" fill="#999">
              {[0, 5, 10].flatMap((x) =>
                [0, 5, 10, 15].map((y) => <rect key={`${x}-${y}`} x={x} y={y} width="3" height="3" />)
              )}
            </svg>
          </SplitTab>
        </Sheet>

        <TabsBar>
          <TabNav>
            <span>◀</span>
            <span>▶</span>
          </TabNav>
          <SheetTab $w={29}>1</SheetTab>
          <SheetTab $w={29}>2</SheetTab>
          <SheetTab $w={29}>3</SheetTab>
          <SheetTab $w={29}>4</SheetTab>
          <SheetTab $w={58}>Demo</SheetTab>
          <SheetTab $w={218} $active>
            FIND,LEFT,RIGHT &amp; LEN Function
          </SheetTab>
          <AddTab>
            <svg width="15" height="15" viewBox="0 0 15 15" fill="none" stroke="#666">
              <circle cx="7.500" cy="7.500" r="6.800" />
              <path d="M7.500 3.500V11.500M3.500 7.500H11.500" />
            </svg>
          </AddTab>
          <HScroll>
            <HBtn>◀</HBtn>
            <HTrack />
            <HBtn>▶</HBtn>
          </HScroll>
        </TabsBar>

        <StatusBar>
          Edit
          <Gap $w={26} />
          <svg width="14" height="14" viewBox="0 0 14 14" fill="none" stroke="#666">
            <path d="M1 1H13V13H1ZM1 4H13" />
            <circle cx="9" cy="9" r="2.500" />
            <path d="M3 7H6M3 10H6" />
          </svg>
          <Gap $w={15} />
          <svg width="15" height="15" viewBox="0 0 15 15" fill="none" stroke="#666">
            <circle cx="6" cy="2.500" r="1.500" />
            <path d="M1 5H11M6 5V9L2 14M6 9 9 12M9 9 14 14M14 9 9 14" />
          </svg>
          <Gap $w={4} />
          Accessibility: Investigate
          <StatusEnd>
            <svg width="16" height="15" viewBox="0 0 16 15" fill="none" stroke="#bbb">
              <path d="M.5.5H15.500V14.500H.5ZM0 5H16M0 10H16M5.500 0V15M10.500 0V15" />
            </svg>
            <Gap $w={22} />
            <svg width="14" height="15" viewBox="0 0 14 15" fill="none" stroke="#bbb">
              <path d="M.5.5H13.500V14.500H.5ZM3 3H11V12H3ZM5 6H9M5 8H9M5 10H9" />
            </svg>
            <Gap $w={22} />
            <svg width="14" height="15" viewBox="0 0 14 15" fill="none" stroke="#bbb">
              <path d="M.5.5H13.500V14.500H.5ZM4 0V7H10V0" />
            </svg>
            <Gap $w={20} />
            <span>−</span>
            <ZoomSlider />
            <span>+</span>
            <Gap $w={13} />
            <span>100%</span>
          </StatusEnd>
        </StatusBar>

        <Taskbar>
          <StartBtn>
            <svg width="16" height="16" viewBox="0 0 16 16" fill="#fff">
              <path d="M0 2.200 6.800 1.200V7.500H0ZM7.700 1 16 0V7.500H7.700ZM0 8.500H6.800V14.800L0 13.800ZM7.700 8.500H16V16L7.700 15Z" />
            </svg>
          </StartBtn>
          <TaskSearch>
            <svg width="15" height="15" viewBox="0 0 15 15" fill="none" stroke="#222" strokeWidth="1.100">
              <circle cx="9.500" cy="5.500" r="4.800" />
              <path d="M6 9 1 14" />
            </svg>
            Type here to search
          </TaskSearch>
          <TaskItem $w={44}>
            <svg width="16" height="16" viewBox="0 0 16 16" fill="none" stroke="#e4e8ec" strokeWidth="1.300">
              <path d="M1 1H11M1 15H11M2.500 4H9.500V12H2.500ZM14 2V4M14 6V14" />
            </svg>
          </TaskItem>
          <TaskItem $w={52}>
            <svg width="19" height="22" viewBox="0 0 19 22">
              <path d="M7 1H12L18 20H1Z" fill="#f08a1d" />
              <path d="M6 7H13L14 11H5Z" fill="#eee" />
              <path d="M0 18H19V22H0Z" fill="#ea7d12" />
            </svg>
          </TaskItem>
          <TaskItem $w={40} $open>
            <svg width="22" height="20" viewBox="0 0 22 20">
              <path d="M0 1H9L11 3H22V19H0Z" fill="#e8c65b" />
              <path d="M0 5H22V19H0Z" fill="#f3d774" />
              <path d="M6 12H16V19H6Z" fill="#3f8db5" />
              <path d="M9 14H13V19H9Z" fill="#f3d774" />
            </svg>
          </TaskItem>
          <TaskItem $w={52}>
            <svg width="24" height="21" viewBox="0 0 24 21">
              <circle cx="10" cy="9" r="9" fill="#e9e3df" />
              <path d="M2 13 17 3 14 15Z" fill="#b7b1b3" />
              <path d="M10 1 12 11" stroke="#c33" />
              <circle cx="15" cy="18" r="2.500" fill="none" stroke="#3a9bd8" strokeWidth="1.600" />
              <circle cx="21" cy="18" r="2.500" fill="none" stroke="#3a9bd8" strokeWidth="1.600" />
              <path d="M15 16 22 8M21 16 14 10" stroke="#3a9bd8" strokeWidth="1.400" />
            </svg>
          </TaskItem>
          <TaskItem $w={42}>
            <svg width="23" height="23" viewBox="0 0 23 23">
              <circle cx="11.500" cy="12.500" r="10.500" fill="#f47a1f" />
              <path d="M11 2c6 0 11 4 11 10-2-5-6-6-8-6Z" fill="#fbc02d" />
              <circle cx="11.500" cy="12" r="5" fill="#7b3fb5" />
              <circle cx="11" cy="11" r="2" fill="#e94f8b" />
            </svg>
          </TaskItem>
          <TaskItem $w={48}>
            <svg width="20" height="24" viewBox="0 0 20 24">
              <circle cx="10" cy="10" r="9" fill="#4c3028" />
              <circle cx="12" cy="9" r="6" fill="#b6552d" />
              <path d="M10 1 10 13" stroke="#eee" strokeWidth="2" />
              <path d="M10 12 5 17M10 12 15 17" stroke="#eee" />
              <circle cx="5" cy="19" r="3" fill="#2d80d0" />
              <circle cx="14" cy="19" r="3" fill="#2d80d0" />
            </svg>
          </TaskItem>
          <TaskItem $w={44}>
            <svg width="23" height="23" viewBox="0 0 23 23">
              <circle cx="11.500" cy="11.500" r="11" fill="#dd4437" />
              <path d="M11.500 11.500 21.500 7A11 11 0 0 1 11 22.500Z" fill="#f4c20d" />
              <path d="M11.500 11.500 11 22.500A11 11 0 0 1 2 6Z" fill="#1f9e55" />
              <circle cx="11.500" cy="11.500" r="5" fill="#fff" />
              <circle cx="11.500" cy="11.500" r="3.800" fill="#4285f4" />
            </svg>
          </TaskItem>
          <TaskItem $w={48} $open>
            <svg width="23" height="23" viewBox="0 0 23 23">
              <rect width="23" height="23" rx="1.500" fill="#5aa60f" />
              <path d="M16 6H10a3 3 0 0 0-3 3V14a3 3 0 0 0 3 3h6" fill="none" stroke="#e8f5d0" strokeWidth="3" />
            </svg>
          </TaskItem>
          <TaskItem $w={44} $open $active>
            <svg width="23" height="22" viewBox="0 0 23 22">
              <rect x="7" y="1" width="16" height="20" rx="1" fill="#1f9e5b" />
              <rect x="15" y="1" width="8" height="10" fill="#37c27c" />
              <rect x="15" y="11" width="8" height="10" fill="#107c41" />
              <rect x="0" y="5" width="12" height="12" rx="1" fill="#0f6b3c" />
              <path d="M3.500 8 8.500 14M8.500 8 3.500 14" stroke="#fff" strokeWidth="1.500" />
            </svg>
          </TaskItem>
          <TaskItem $w={48} $open>
            <svg width="23" height="23" viewBox="0 0 23 23">
              <rect width="23" height="23" rx="1.500" fill="#ef5a4a" />
              <path d="M16 6H10a3 3 0 0 0-3 3V14a3 3 0 0 0 3 3h6" fill="none" stroke="#fde2da" strokeWidth="3" />
            </svg>
          </TaskItem>
          <Gap $w={30} />
          <TrayText $w={56}>Desktop</TrayText>
          <Slot $w={10}>
            <DoubleChevron>»</DoubleChevron>
          </Slot>
          <Gap $w={28} />
          <Slot $w={28}>
            <svg width="26" height="22" viewBox="0 0 26 22" fill="#e8edf2">
              <path d="M4 13a4 4 0 0 1 2-7 7 7 0 0 1 13 1 3.500 3.500 0 0 1 2 6Z" />
              <path d="M1 15H25M1 18H25M5 21H21" stroke="#e8edf2" fill="none" />
            </svg>
          </Slot>
          <TrayText $w={34} $size={12.5}>
            7°C
          </TrayText>
          <Slot $w={28}>
            <svg width="11" height="7" viewBox="0 0 11 7" fill="none" stroke="#e8edf2" strokeWidth="1.300">
              <path d="M.5 6 5.500 1 10.500 6" />
            </svg>
          </Slot>
          <Slot $w={18}>
            <svg width="12" height="15" viewBox="0 0 12 15" fill="none" stroke="#e8edf2">
              <path d="M2 4H8V11H2ZM8 7 11 5V10L8 8.500M2 1.500H8M2 13.500H8" />
            </svg>
          </Slot>
          <Slot $w={26}>
            <svg width="16" height="10" viewBox="0 0 16 10" fill="#e8edf2">
              <rect x="5" y="2" width="11" height="7" />
              <path d="M0 4H5M1 1V4M3 1V4" stroke="#e8edf2" />
            </svg>
          </Slot>
          <Slot $w={18}>
            <svg width="16" height="13" viewBox="0 0 16 13" fill="none" stroke="#e8edf2">
              <path d="M1 4.500H3.500L7 1.500V11.500L3.500 8.500H1ZM9 4.500a3 3 0 0 1 0 4M11 3a5 5 0 0 1 0 7M13 1.500a7 7 0 0 1 0 10" />
            </svg>
          </Slot>
          <Slot $w={32}>
            <svg width="13" height="12" viewBox="0 0 13 12" fill="none" stroke="#8c98a3">
              <path d="M.5 11.500a11 11 0 0 1 11-11M3.500 11.500a8 8 0 0 1 8-8M6.500 11.500a5 5 0 0 1 5-5" />
              <circle cx="10.500" cy="10.500" r="1.500" fill="#e8edf2" stroke="none" />
            </svg>
          </Slot>
          <TrayText $w={20} $size={11}>
            ENG
          </TrayText>
          <TrayText $w={80} $size={11}>
            <span>04:19</span>
            <span>06-01-2023</span>
          </TrayText>
          <Slot $w={24}>
            <svg width="16" height="16" viewBox="0 0 16 16" fill="#f2f4f6">
              <path d="M0 0H16V12H11L8 15 5 12H0Z" />
              <path d="M3 3.500H13M3 6H13M3 8.500H10" stroke="#1b2c3b" />
            </svg>
          </Slot>
        </Taskbar>
      </Shell>
    </>
  );
}
